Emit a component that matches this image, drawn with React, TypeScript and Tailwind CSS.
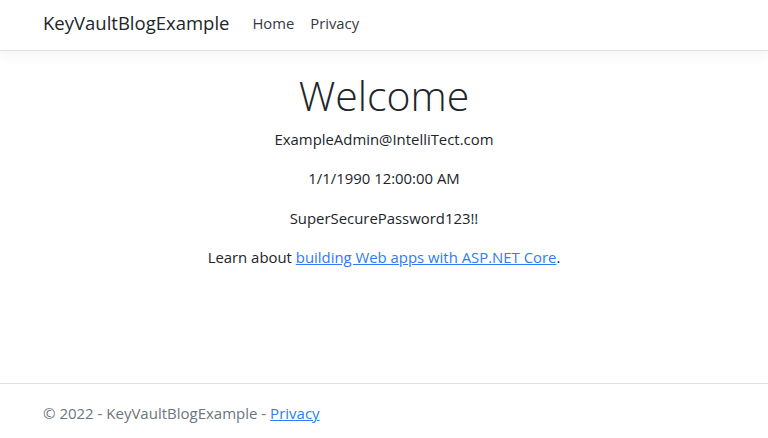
import React from "react";

export default function App() {
  return (
    <div
      className="flex min-h-[438px] flex-col bg-white text-[#212529]"
      style={{ fontFamily: '"Open Sans", "Noto Sans", sans-serif' }}
    >
      <nav className="flex h-[51px] items-center border-b border-[#dee2e6] bg-white px-[43px] pb-[4px] shadow-[0_4px_12px_rgba(0,0,0,0.05)]">
        <a className="mr-[23px] text-[18.5px] leading-[30px] text-[#212529]" href="#">
          KeyVaultBlogExample
        </a>
        <div className="flex items-center gap-[16px] text-[14.8px] text-[#343a40]">
          <a href="#">Home</a>
          <a href="#">Privacy</a>
        </div>
      </nav>
      <main className="flex flex-1 flex-col items-center pt-[19px] text-center text-[14.9px] leading-[23.3px]">
        <h1 className="mb-[8px] text-[41px] font-light leading-[50px]">Welcome</h1>
        <p className="mb-[16px]">ExampleAdmin@IntelliTect.com</p>
        <p className="mb-[16px]">1/1/1990 12:00:00 AM</p>
        <p className="mb-[16px]">SuperSecurePassword123!!</p>
        <p>
          Learn about{" "}
          <a href="#" className="text-[#2f7bf5] underline">
            building Web apps with ASP.NET Core
          </a>
          .
        </p>
      </main>
      <footer className="h-[55px] border-t border-[#dee2e6] px-[43px] pt-[17px] text-[15px] leading-[24px] text-[#6c757d]">
        © 2022 - KeyVaultBlogExample -{" "}
        <a href="#" className="text-[#2f7bf5] underline">
          Privacy
        </a>
      </footer>
    </div>
  );
}
